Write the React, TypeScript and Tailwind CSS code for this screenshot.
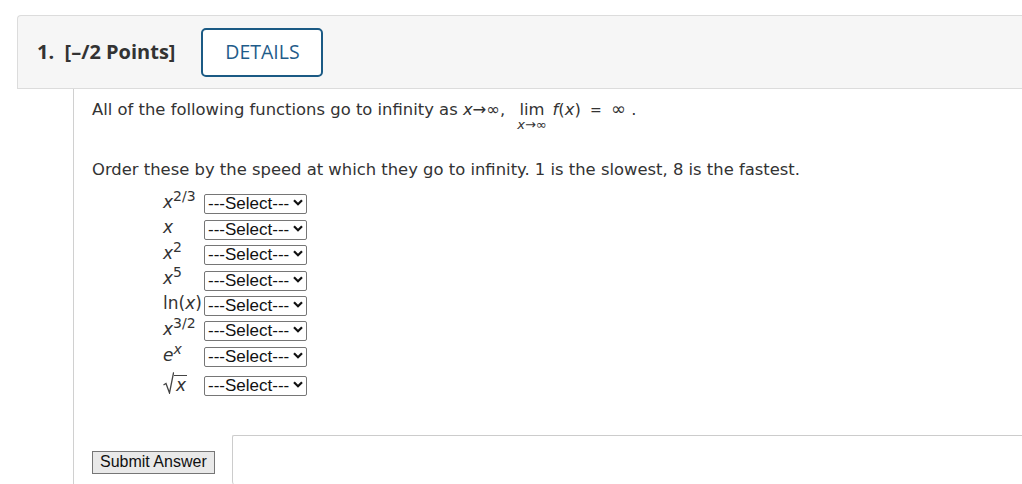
import React from 'react'

const body = { fontFamily: '"DejaVu Sans", Verdana, sans-serif' }
const head = { fontFamily: '"Open Sans", "Noto Sans", sans-serif' }
const arial = { fontFamily: '"Liberation Sans", Arial, sans-serif' }

function Chevron() {
  return (
    <svg className="w-[10px] h-[7px]" viewBox="0 0 10 7" fill="none" stroke="#111" strokeWidth={2.2}>
      <path d="M1 1.2l4 4 4-4" />
    </svg>
  )
}

function SelectBox() {
  return (
    <div className="relative w-[103px] h-[20px]">
      <select
        className="appearance-none w-full h-full border border-[#767676] rounded-[2px] bg-white pl-[3px] text-[17px] leading-[18px] text-[#111] outline-none"
        style={arial}
        defaultValue=""
      >
        <option value="">---Select---</option>
        {[1, 2, 3, 4, 5, 6, 7, 8].map(n => (
          <option key={n} value={n}>{n}</option>
        ))}
      </select>
      <span className="pointer-events-none absolute right-[4px] top-[7px] flex">
        <Chevron />
      </span>
    </div>
  )
}

function X() {
  return <i className="italic">x</i>
}

const rows: { label: React.ReactNode; h: string }[] = [
  { label: <><X /><sup className="text-[14px] not-italic">2/3</sup></>, h: 'h-[26px]' },
  { label: <X />, h: 'h-[25px]' },
  { label: <><X /><sup className="text-[14px]">2</sup></>, h: 'h-[26px]' },
  { label: <><X /><sup className="text-[14px]">5</sup></>, h: 'h-[25px]' },
  { label: <>ln(<X />)</>, h: 'h-[25px]' },
  { label: <><X /><sup className="text-[14px]">3/2</sup></>, h: 'h-[26px]' },
  { label: <><i>e</i><sup className="text-[14px] italic">x</sup></>, h: 'h-[26px]' },
  {
    label: (
      <span className="inline-flex items-end">
        <svg className="w-[11px] h-[22px]" viewBox="0 0 11 22" fill="none" stroke="#444" strokeWidth={1.3}>
          <path d="M0.5 13l2.5-1.5 3.5 9.5L10.5 1H11" />
        </svg>
        <span className="border-t-[1.3px] border-[#444] pl-[2px] pr-[1px] leading-[18px]"><X /></span>
      </span>
    ),
    h: 'h-[32px]',
  },
]

export default function App() {
  return (
    <div className="w-[1022px] h-[484px] bg-white overflow-hidden pt-[15px] pl-[17px]">
      {/* question header */}
      <div className="h-[74px] bg-[#f6f6f6] border border-[#dcdcdc] border-r-0 rounded-tl-[4px] flex items-center pl-[19px]" style={head}>
        <span className="text-[20px] font-bold text-[#333] whitespace-pre">1.  [–/2 Points]</span>
        <button
          className="ml-[26px] w-[122px] h-[49px] border-2 border-[#1b5a84] rounded-[5px] bg-white text-[19.5px] font-medium text-[#1f5c8a]"
          style={head}
        >
          DETAILS
        </button>
      </div>

      {/* question body */}
      <div className="ml-[56px] h-[400px] border-l border-[#d0d0d0] rounded-bl-[6px] pl-[18px] pt-[9px] text-[16.4px] text-[#333]" style={body}>
        <p className="leading-[22px] whitespace-nowrap">
          All of the following functions go to infinity as <X />→∞,{' '}
          <span className="relative inline-block ml-[9px] mr-[8px]">
            lim
            <span className="absolute left-1/2 -translate-x-1/2 top-[15px] text-[13px] whitespace-nowrap"><X />→∞</span>
          </span>
          <i>f</i>(<X />) <span className="text-[14px] mx-[4px]">=</span> <span className="text-[18px]">∞</span> .
        </p>

        <p className="mt-[38px] leading-[22px] whitespace-nowrap">
          Order these by the speed at which they go to infinity. 1 is the slowest, 8 is the fastest.
        </p>

        <div className="mt-[8px] ml-[71px] flex flex-col">
          {rows.map((r, i) => (
            <div key={i} className={`${r.h} flex items-center`}>
              <div className="w-[41px] text-[17px] text-[#333] leading-none whitespace-nowrap">{r.label}</div>
              <SelectBox />
            </div>
          ))}
        </div>

        <div className="mt-[35px] flex items-start">
          <div className="pt-[15px]">
            <button
              className="h-[23px] px-[7px] border border-[#767676] bg-[#e9e9e9] text-[16px] text-[#111] leading-[20px]"
              style={arial}
            >
              Submit Answer
            </button>
          </div>
          <div className="ml-[17px] flex-1 h-[52px] border-t border-l border-[#cccccc] rounded-tl-[2px] rounded-bl-[6px]" />
        </div>
      </div>
    </div>
  )
}
